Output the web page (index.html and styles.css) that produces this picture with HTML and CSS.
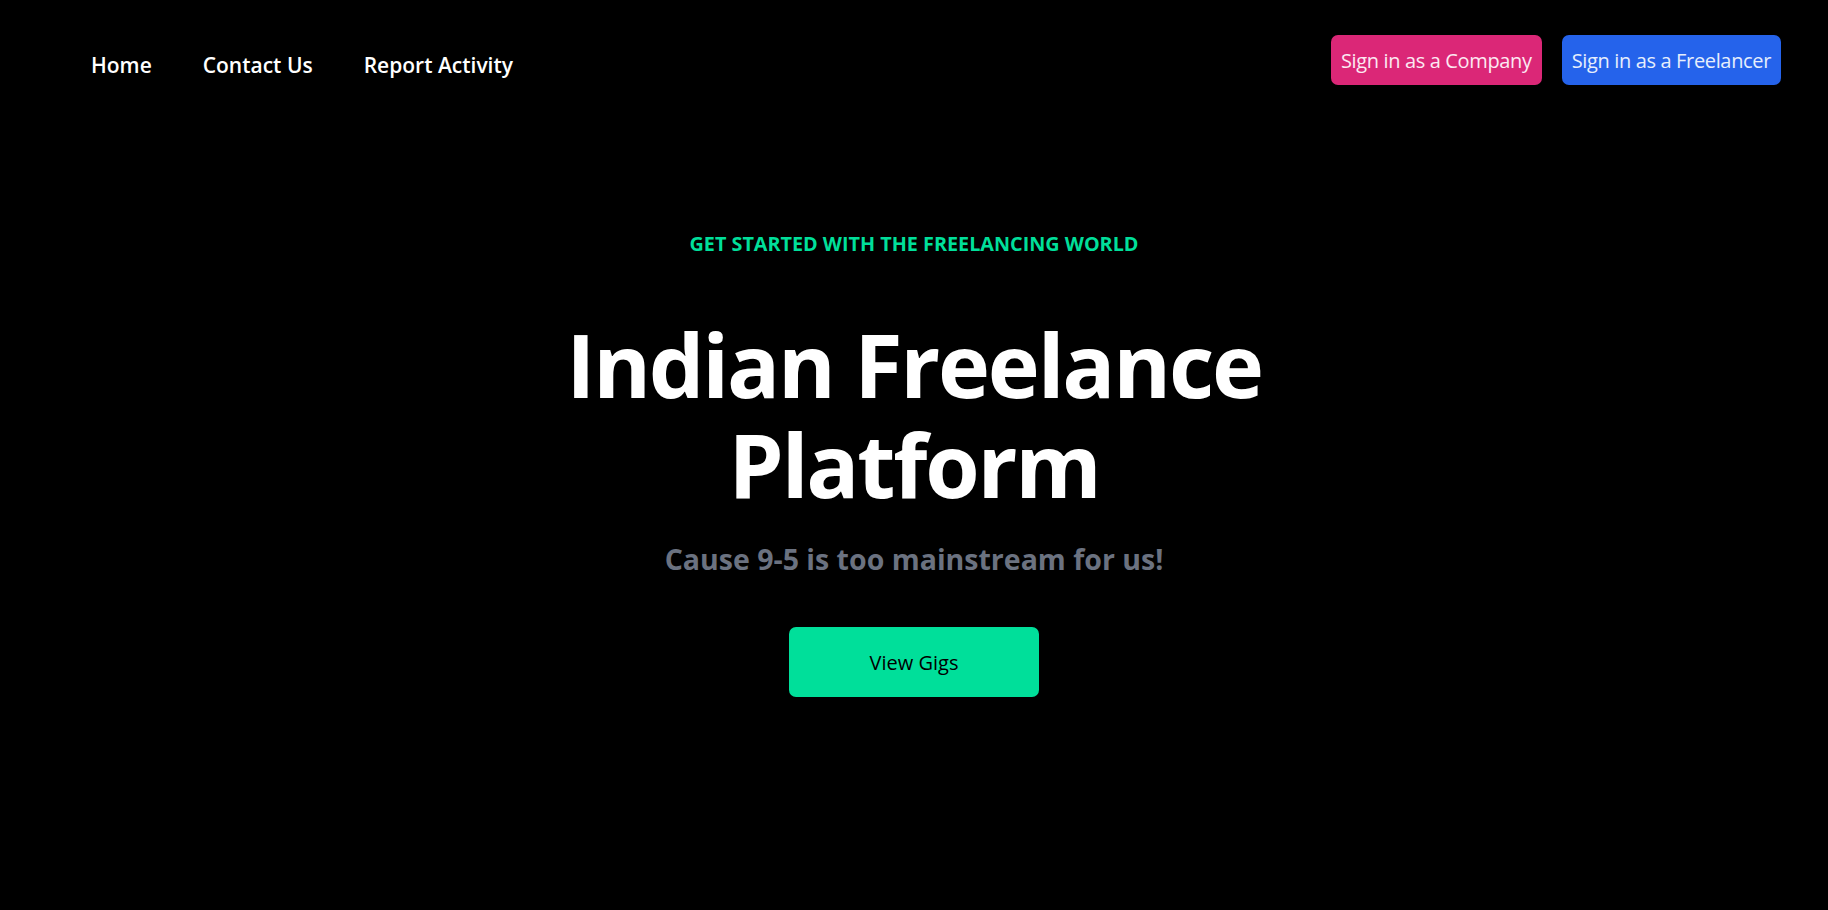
FILE: index.html
```html
<!DOCTYPE html>
<html lang="en">
<head>
<meta charset="utf-8">
<title>Indian Freelance Platform</title>
<link rel="stylesheet" href="styles.css">
</head>
<body>
<header class="header">
  <nav class="nav">
    <a class="nav-link" href="#">Home</a>
    <a class="nav-link" href="#">Contact Us</a>
    <a class="nav-link" href="#">Report Activity</a>
  </nav>
  <div class="auth">
    <button class="auth-btn company">Sign in as a Company</button>
    <button class="auth-btn freelancer">Sign in as a Freelancer</button>
  </div>
</header>
<main class="hero">
  <p class="eyebrow">GET STARTED WITH THE FREELANCING WORLD</p>
  <h1 class="title">Indian Freelance<br>Platform</h1>
  <p class="tagline">Cause 9-5 is too mainstream for us!</p>
  <button class="cta">View Gigs</button>
</main>
</body>
</html>
```
FILE: styles.css
```css
html, body {
  margin: 0;
  padding: 0;
  background: #000;
  height: 100%;
}
body {
  font-family: "Open Sans", "Noto Sans", sans-serif;
  color: #fff;
}
.header {
  display: flex;
  justify-content: space-between;
  align-items: flex-start;
  padding: 35px 47px 0 91px;
}
.nav {
  display: flex;
  gap: 51px;
  margin-top: 15px;
}
.nav-link {
  color: #fff;
  text-decoration: none;
  font-size: 21px;
  font-weight: 600;
  line-height: 30px;
}
.auth {
  display: flex;
  gap: 20px;
}
.auth-btn {
  height: 50px;
  padding: 0 10px;
  border: none;
  border-radius: 7px;
  font-family: inherit;
  font-size: 20px;
  letter-spacing: -0.35px;
  font-weight: 400;
  cursor: pointer;
}
.company {
  background: #db2777;
  color: #fce9f2;
}
.freelancer {
  background: #2563eb;
  color: #e6eefc;
}
.hero {
  display: flex;
  flex-direction: column;
  align-items: center;
  text-align: center;
  padding-top: 144px;
}
.eyebrow {
  margin: 0;
  color: #00df9a;
  font-size: 19.8px;
  font-weight: 700;
  line-height: 30px;
}
.title {
  margin: 55px 0 0;
  font-size: 88px;
  letter-spacing: -2.2px;
  font-weight: 700;
  line-height: 100px;
}
.tagline {
  margin: 27px 0 0;
  color: #6b7280;
  font-size: 28.5px;
  font-weight: 700;
  line-height: 36px;
}
.cta {
  margin-top: 50px;
  width: 250px;
  height: 70px;
  border: none;
  border-radius: 7px;
  background: #00df9a;
  color: #000;
  font-family: inherit;
  font-size: 20px;
  font-weight: 500;
  cursor: pointer;
}
```
